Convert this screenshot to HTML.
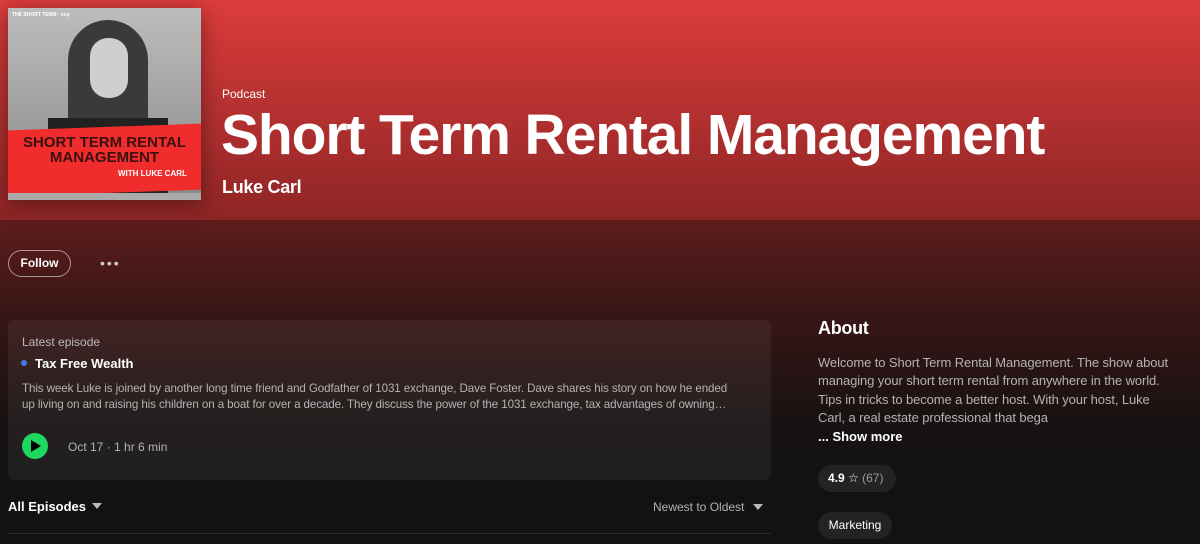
<!DOCTYPE html>
<html><head><meta charset="utf-8"><style>
*{margin:0;padding:0;box-sizing:border-box}
body{width:1200px;height:544px;overflow:hidden;background:#121212;font-family:"Liberation Sans",sans-serif;color:#fff;position:relative}
.hdr{position:absolute;left:0;top:0;width:1200px;height:220px;background:linear-gradient(#dc3c3c,#8e2525)}
.band{position:absolute;left:0;top:220px;width:1200px;height:324px;background:linear-gradient(#5e1c1c 0px,#3a1616 90px,#181212 200px,#121212 260px)}
.cover{position:absolute;left:8px;top:8px;width:193px;height:192px;background:linear-gradient(#bdbdbd,#888);overflow:hidden;box-shadow:0 4px 20px rgba(0,0,0,.4)}
.abs{position:absolute}
</style></head><body>
<div class="hdr"></div>
<div class="band"></div>
<div class="cover">
 <div class="abs" style="left:60px;top:12px;width:80px;height:120px;border-radius:40px 40px 10px 10px;background:#3a3a3a"></div>
 <div class="abs" style="left:82px;top:30px;width:38px;height:60px;border-radius:18px;background:#cfcfcf"></div>
 <div class="abs" style="left:40px;top:110px;width:120px;height:80px;background:#222"></div>
 <div class="abs" style="left:4px;top:4px;font-size:5px;color:#fff;font-weight:bold">THE SHORT TERM · exp</div>
 <div class="abs" style="left:0;top:119px;width:193px;height:66px;background:#f02c2c;transform:skewY(-2deg)"></div>
 <div class="abs" style="left:0;top:127px;width:193px;text-align:center;font-weight:bold;font-size:15px;line-height:15px;color:#3a1010">SHORT TERM RENTAL<br>MANAGEMENT</div>
 <div class="abs" style="left:110px;top:161px;font-weight:bold;font-size:8px;color:#fff">WITH LUKE CARL</div>
 <div class="abs" style="left:0;top:185px;width:193px;height:10px;background:#aaa"></div>
</div>
<div class="abs" style="left:222px;top:87px;font-size:12px">Podcast</div>
<div class="abs" style="left:221px;top:100px;font-size:57px;font-weight:bold;letter-spacing:-1.1px;line-height:70px;white-space:nowrap">Short Term Rental Management</div>
<div class="abs" style="left:222px;top:177px;font-size:18px;font-weight:bold;letter-spacing:-.3px">Luke Carl</div>
<div class="abs" style="left:8px;top:250px;width:63px;height:27px;border:1px solid rgba(255,255,255,.55);border-radius:14px;font-size:12px;font-weight:bold;text-align:center;line-height:25px">Follow</div>
<div class="abs" style="left:100px;top:255px;font-size:14px;letter-spacing:2px;color:#ccc">•••</div>
<div class="abs" style="left:8px;top:320px;width:763px;height:160px;border-radius:6px;background:rgba(255,255,255,.06)"></div>
<div class="abs" style="left:22px;top:335px;font-size:12px;color:#bbb">Latest episode</div>
<div class="abs" style="left:21px;top:360px;width:6px;height:6px;border-radius:3px;background:#3d7ce6"></div>
<div class="abs" style="left:35px;top:356px;font-size:13px;font-weight:bold">Tax Free Wealth</div>
<div class="abs" style="left:22px;top:381px;width:720px;height:32px;overflow:hidden;font-size:11.6px;letter-spacing:-.1px;line-height:16px;color:#b3b3b3">This week Luke is joined by another long time friend and Godfather of 1031 exchange, Dave Foster. Dave shares his story on how he ended up living on and raising his children on a boat for over a decade. They discuss the power of the 1031 exchange, tax advantages of owning…</div>
<div class="abs" style="left:22px;top:433px;width:26px;height:26px;border-radius:13px;background:#1ed760"></div>
<svg class="abs" style="left:29px;top:439px" width="14" height="14"><path d="M2 1 L12 7 L2 13Z" fill="#000"/></svg>
<div class="abs" style="left:68px;top:440px;font-size:12px;color:#b3b3b3">Oct 17 · 1 hr 6 min</div>
<div class="abs" style="left:8px;top:499px;font-size:13px;font-weight:bold">All Episodes</div>
<svg class="abs" style="left:92px;top:503px" width="10" height="6"><path d="M0 0H10L5 6Z" fill="#bbb"/></svg>
<div class="abs" style="left:653px;top:500px;font-size:12px;color:#b3b3b3">Newest to Oldest</div>
<svg class="abs" style="left:753px;top:504px" width="10" height="6"><path d="M0 0H10L5 6Z" fill="#bbb"/></svg>
<div class="abs" style="left:8px;top:533px;width:763px;height:1px;background:#2a2a2a"></div>
<div class="abs" style="left:818px;top:318px;font-size:18px;font-weight:bold;letter-spacing:-.3px">About</div>
<div class="abs" style="left:818px;top:354px;white-space:nowrap;font-size:13px;line-height:18.3px;color:#b3b3b3;letter-spacing:-.1px">Welcome to Short Term Rental Management. The show about<br>managing your short term rental from anywhere in the world.<br>Tips in tricks to become a better host. With your host, Luke<br>Carl, a real estate professional that bega</div>
<div class="abs" style="left:818px;top:429px;font-size:13px;font-weight:bold">... Show more</div>
<div class="abs" style="left:818px;top:465px;width:78px;height:27px;border-radius:14px;background:#232323;font-size:12px;line-height:27px;padding-left:10px"><b>4.9</b> <span>☆</span> <span style="color:#999">(67)</span></div>
<div class="abs" style="left:818px;top:512px;width:74px;height:27px;border-radius:14px;background:#232323;font-size:12px;line-height:27px;text-align:center">Marketing</div>
</body></html>
